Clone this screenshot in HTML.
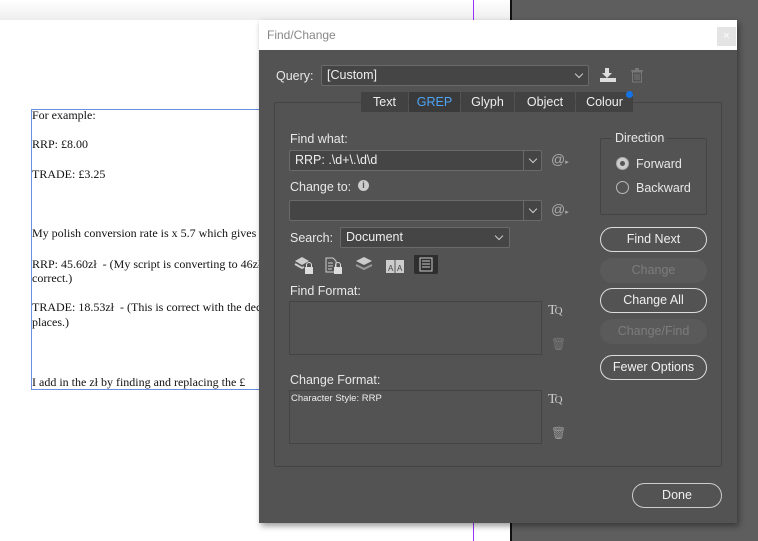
<!DOCTYPE html>
<html><head><meta charset="utf-8"><style>
*{box-sizing:border-box;margin:0;padding:0}
body{width:758px;height:541px;overflow:hidden;position:relative;background:#fff;font-family:"Liberation Sans","DejaVu Sans",sans-serif}
.a{position:absolute}
.doc{font-family:"Liberation Serif",serif;font-size:12px;color:#111;position:absolute;left:32px;white-space:nowrap}
.lbl{position:absolute;color:#e8e8e8;font-size:12.5px}
.inp{position:absolute;background:#454545;border:1px solid #6a6a6a;border-radius:2px;color:#eee;font-size:12.5px;padding:2px 5px}
.btn{position:absolute;left:600px;width:107px;height:25px;border:1.5px solid #ddd;border-radius:13px;color:#f0f0f0;font-size:12.5px;text-align:center;line-height:22px}
.dis{border:none;background:#5a5a5a;color:#7c7c7c;line-height:25px}
.tab{position:absolute;top:92px;height:20px;background:#424242;color:#eee;font-size:12.5px;text-align:center;line-height:20px}
.chev{position:absolute;width:6px;height:6px;border-right:1px solid #ccc;border-bottom:1px solid #ccc;transform:rotate(45deg)}
</style></head><body>
<div class="a" style="left:0;top:0;width:510px;height:20px;background:linear-gradient(#fff,#eee)"></div>
<div class="a" style="left:473px;top:0;width:1px;height:541px;background:#9b30ff"></div>
<div class="a" style="left:510px;top:0;width:2px;height:541px;background:#111"></div>
<div class="a" style="left:512px;top:0;width:246px;height:541px;background:#5e5e5e"></div>
<div class="a" style="left:31px;top:109px;width:240px;height:281px;border:1px solid #6a8fe0"></div>
<div class="doc" style="top:108px">For example:</div>
<div class="doc" style="top:137px">RRP: £8.00</div>
<div class="doc" style="top:167px">TRADE: £3.25</div>
<div class="doc" style="top:226px">My polish conversion rate is x 5.7 which gives</div>
<div class="doc" style="top:257px">RRP: 45.60zł &nbsp;- (My script is converting to 46zł</div>
<div class="doc" style="top:271px">correct.)</div>
<div class="doc" style="top:300px">TRADE: 18.53zł &nbsp;- (This is correct with the dec</div>
<div class="doc" style="top:315px">places.)</div>
<div class="doc" style="top:375px">I add in the zł by finding and replacing the £</div>

<div class="a" style="left:259px;top:20px;width:478px;height:503px;background:#535353;box-shadow:2px 3px 6px rgba(0,0,0,.4)"></div>
<div class="a" style="left:259px;top:20px;width:478px;height:30px;background:#fff"></div>
<div class="a" style="left:267px;top:28px;color:#888;font-size:12px">Find/Change</div>
<div class="a" style="left:717px;top:27px;width:19px;height:19px;background:#e4e4e4;color:#fff;font-size:11px;text-align:center;line-height:19px">×</div>

<div class="lbl" style="left:276px;top:69px">Query:</div>
<div class="inp" style="left:321px;top:65px;width:268px;height:21px">[Custom]</div>
<div class="chev" style="left:576px;top:71px"></div>
<svg class="a" style="left:599px;top:67px" width="18" height="16"><path d="M6 1h4v5h3l-5 5-5-5h3z" fill="#ddd"/><rect x="1" y="11" width="16" height="4" fill="#ddd"/></svg>
<svg class="a" style="left:630px;top:68px" width="14" height="15"><rect x="1" y="2" width="12" height="1.5" fill="#777"/><rect x="5" y="0" width="4" height="2" fill="#777"/><path d="M2.5 4h9v10h-9z M5 6v6 M7 6v6 M9 6v6" stroke="#777" fill="none" stroke-width="1"/></svg>

<div class="a" style="left:274px;top:102px;width:448px;height:365px;border:1px solid #444;border-radius:2px"></div>
<div class="tab" style="left:361px;width:47px">Text</div>
<div class="tab" style="left:409px;width:51px;background:#3a3a3a;color:#4ea4f5">GREP</div>
<div class="tab" style="left:461px;width:53px">Glyph</div>
<div class="tab" style="left:515px;width:60px">Object</div>
<div class="tab" style="left:576px;width:57px">Colour</div>
<div class="a" style="left:626px;top:91px;width:7px;height:7px;border-radius:50%;background:#1473e6"></div>

<div class="lbl" style="left:290px;top:132px">Find what:</div>
<div class="inp" style="left:289px;top:150px;width:253px;height:21px">RRP: .\d+\.\d\d</div>
<div class="a" style="left:523px;top:151px;width:1px;height:19px;background:#6a6a6a"></div>
<div class="chev" style="left:530px;top:156px"></div>
<div class="a" style="left:551px;top:151px;color:#aaa;font-size:14px">@<span style="font-size:7px">▸</span></div>
<div class="lbl" style="left:290px;top:180px">Change to:</div>
<div class="a" style="left:358px;top:180px;width:11px;height:11px;border-radius:50%;background:#ccc;color:#535353;font-size:9px;font-weight:bold;text-align:center;line-height:11px">i</div>
<div class="inp" style="left:289px;top:200px;width:253px;height:21px"></div>
<div class="a" style="left:523px;top:201px;width:1px;height:19px;background:#6a6a6a"></div>
<div class="chev" style="left:530px;top:206px"></div>
<div class="a" style="left:551px;top:201px;color:#aaa;font-size:14px">@<span style="font-size:7px">▸</span></div>

<div class="a" style="left:600px;top:138px;width:107px;height:77px;border:1px solid #444;border-radius:2px"></div>
<div class="a" style="left:612px;top:131px;background:#535353;padding:0 3px;color:#e8e8e8;font-size:12.5px">Direction</div>
<div class="a" style="left:616px;top:157px;width:13px;height:13px;border-radius:50%;background:#ccc;border:1px solid #aaa"><div style="margin:3px;width:5px;height:5px;border-radius:50%;background:#555"></div></div>
<div class="lbl" style="left:636px;top:157px">Forward</div>
<div class="a" style="left:616px;top:181px;width:13px;height:13px;border-radius:50%;border:1px solid #bbb"></div>
<div class="lbl" style="left:636px;top:181px">Backward</div>

<div class="lbl" style="left:290px;top:231px">Search:</div>
<div class="inp" style="left:340px;top:227px;width:170px;height:21px">Document</div>
<div class="chev" style="left:496px;top:233px"></div>
<svg class="a" style="left:292px;top:255px" width="150" height="20">
<path d="M3 6l7-4 7 4-7 4z" fill="#ccc"/><path d="M3 9l7 4 2-1" stroke="#ccc" fill="none" stroke-width="2"/>
<rect x="13" y="12" width="8" height="7" fill="#ddd"/><path d="M14.5 12v-2a2.5 2.5 0 0 1 5 0v2" stroke="#ddd" fill="none"/>
<path d="M34 3h7l3 3v11h-10z" stroke="#ccc" fill="none"/><path d="M36 8h5M36 11h5M36 14h4" stroke="#ccc"/>
<rect x="42" y="12" width="8" height="7" fill="#ddd"/><path d="M43.5 12v-2a2.5 2.5 0 0 1 5 0v2" stroke="#ddd" fill="none"/>
<path d="M64 6l8-4 8 4-8 4z" fill="#ccc"/><path d="M64 10l8 4 8-4" stroke="#999" fill="none" stroke-width="2"/>
<rect x="94" y="5" width="18" height="13" fill="#ccc"/><path d="M103 2v18" stroke="#535353"/><text x="96" y="16" font-size="8" fill="#444" font-family="Liberation Sans">A</text><text x="105" y="16" font-size="8" fill="#444" font-family="Liberation Sans">A</text>
<rect x="122" y="-1" width="24" height="20" rx="2" fill="#2e2e2e"/><rect x="128" y="3" width="12" height="13" fill="none" stroke="#ccc"/><path d="M130 6h8M130 9h8M130 12h8" stroke="#ccc"/>
</svg>

<div class="lbl" style="left:290px;top:284px">Find Format:</div>
<div class="a" style="left:289px;top:301px;width:253px;height:54px;border:1px solid #444"></div>
<div class="a" style="left:548px;top:303px;color:#ccc;font-family:'Liberation Serif',serif;font-size:14px">T<span style="font-size:11px;margin-left:-2px">Q</span></div>
<div class="a" style="left:551px;top:337px;color:#777;font-size:12px">🗑</div>
<div class="lbl" style="left:290px;top:373px">Change Format:</div>
<div class="a" style="left:289px;top:390px;width:253px;height:54px;border:1px solid #444"></div>
<div class="a" style="left:291px;top:393px;color:#eee;font-size:9.5px">Character Style: RRP</div>
<div class="a" style="left:548px;top:392px;color:#ccc;font-family:'Liberation Serif',serif;font-size:14px">T<span style="font-size:11px;margin-left:-2px">Q</span></div>
<div class="a" style="left:551px;top:426px;color:#999;font-size:12px">🗑</div>

<div class="btn" style="top:227px">Find Next</div>
<div class="btn dis" style="top:258px">Change</div>
<div class="btn" style="top:288px">Change All</div>
<div class="btn dis" style="top:319px">Change/Find</div>
<div class="btn" style="top:355px">Fewer Options</div>
<div class="btn" style="left:632px;width:90px;top:483px;border-color:#ccc">Done</div>
</body></html>
